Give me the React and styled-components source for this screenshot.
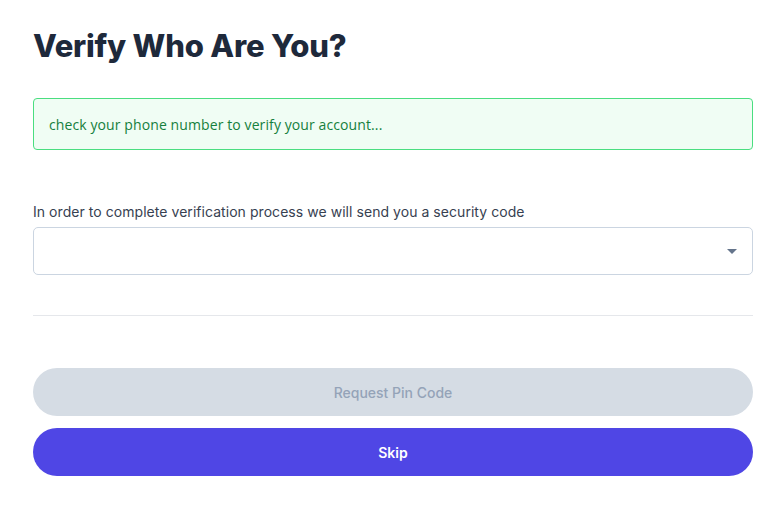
import React from 'react';
import styled, { createGlobalStyle } from 'styled-components';

const Global = createGlobalStyle`
  body {
    margin: 0;
    background: #fff;
    font-family: Inter, "Liberation Sans", sans-serif;
  }
`;

const Page = styled.div`
  width: 720px;
  padding: 26px 30px 0 33px;
  display: flex;
  flex-direction: column;
`;

const Title = styled.h1`
  margin: 0;
  font-size: 31px;
  line-height: 40px;
  font-weight: 800;
  color: #1e293b;
  letter-spacing: -0.2px;
`;

const Alert = styled.div`
  margin-top: 32px;
  height: 52px;
  box-sizing: border-box;
  border: 1px solid #4ade80;
  border-radius: 4px;
  background: #f0fdf4;
  display: flex;
  align-items: center;
  padding: 0 15px;
  font-family: "Open Sans", sans-serif;
  font-size: 14px;
  letter-spacing: 0.1px;
  color: #15803d;
`;

const Label = styled.label`
  margin-top: 52px;
  font-size: 14px;
  line-height: 20px;
  letter-spacing: 0.05px;
  color: #374151;
`;

const SelectBox = styled.div`
  margin-top: 5px;
  height: 48px;
  box-sizing: border-box;
  border: 1px solid #cbd5e1;
  border-radius: 5px;
  display: flex;
  align-items: center;
  justify-content: flex-end;
  padding-right: 15px;
`;

const Caret = styled.span`
  width: 0;
  height: 0;
  border-left: 5px solid transparent;
  border-right: 5px solid transparent;
  border-top: 5px solid #64748b;
`;

const Divider = styled.hr`
  margin: 40px 0 0;
  border: 0;
  border-top: 1px solid #e5e7eb;
`;

const Button = styled.button`
  margin-top: ${p => p.$top}px;
  height: 48px;
  border: 0;
  border-radius: 24px;
  font-family: Inter, sans-serif;
  font-size: 14px;
  font-weight: ${p => (p.$primary ? 600 : 500)};
  background: ${p => (p.$primary ? '#4f46e5' : '#d5dce4')};
  color: ${p => (p.$primary ? '#ffffff' : '#94a3b8')};
`;

export default function App() {
  return (
    <>
      <Global />
      <Page>
        <Title>Verify Who Are You?</Title>
        <Alert>check your phone number to verify your account...</Alert>
        <Label>In order to complete verification process we will send you a security code</Label>
        <SelectBox>
          <Caret />
        </SelectBox>
        <Divider />
        <Button $top={52} disabled>Request Pin Code</Button>
        <Button $top={12} $primary>Skip</Button>
      </Page>
    </>
  );
}
